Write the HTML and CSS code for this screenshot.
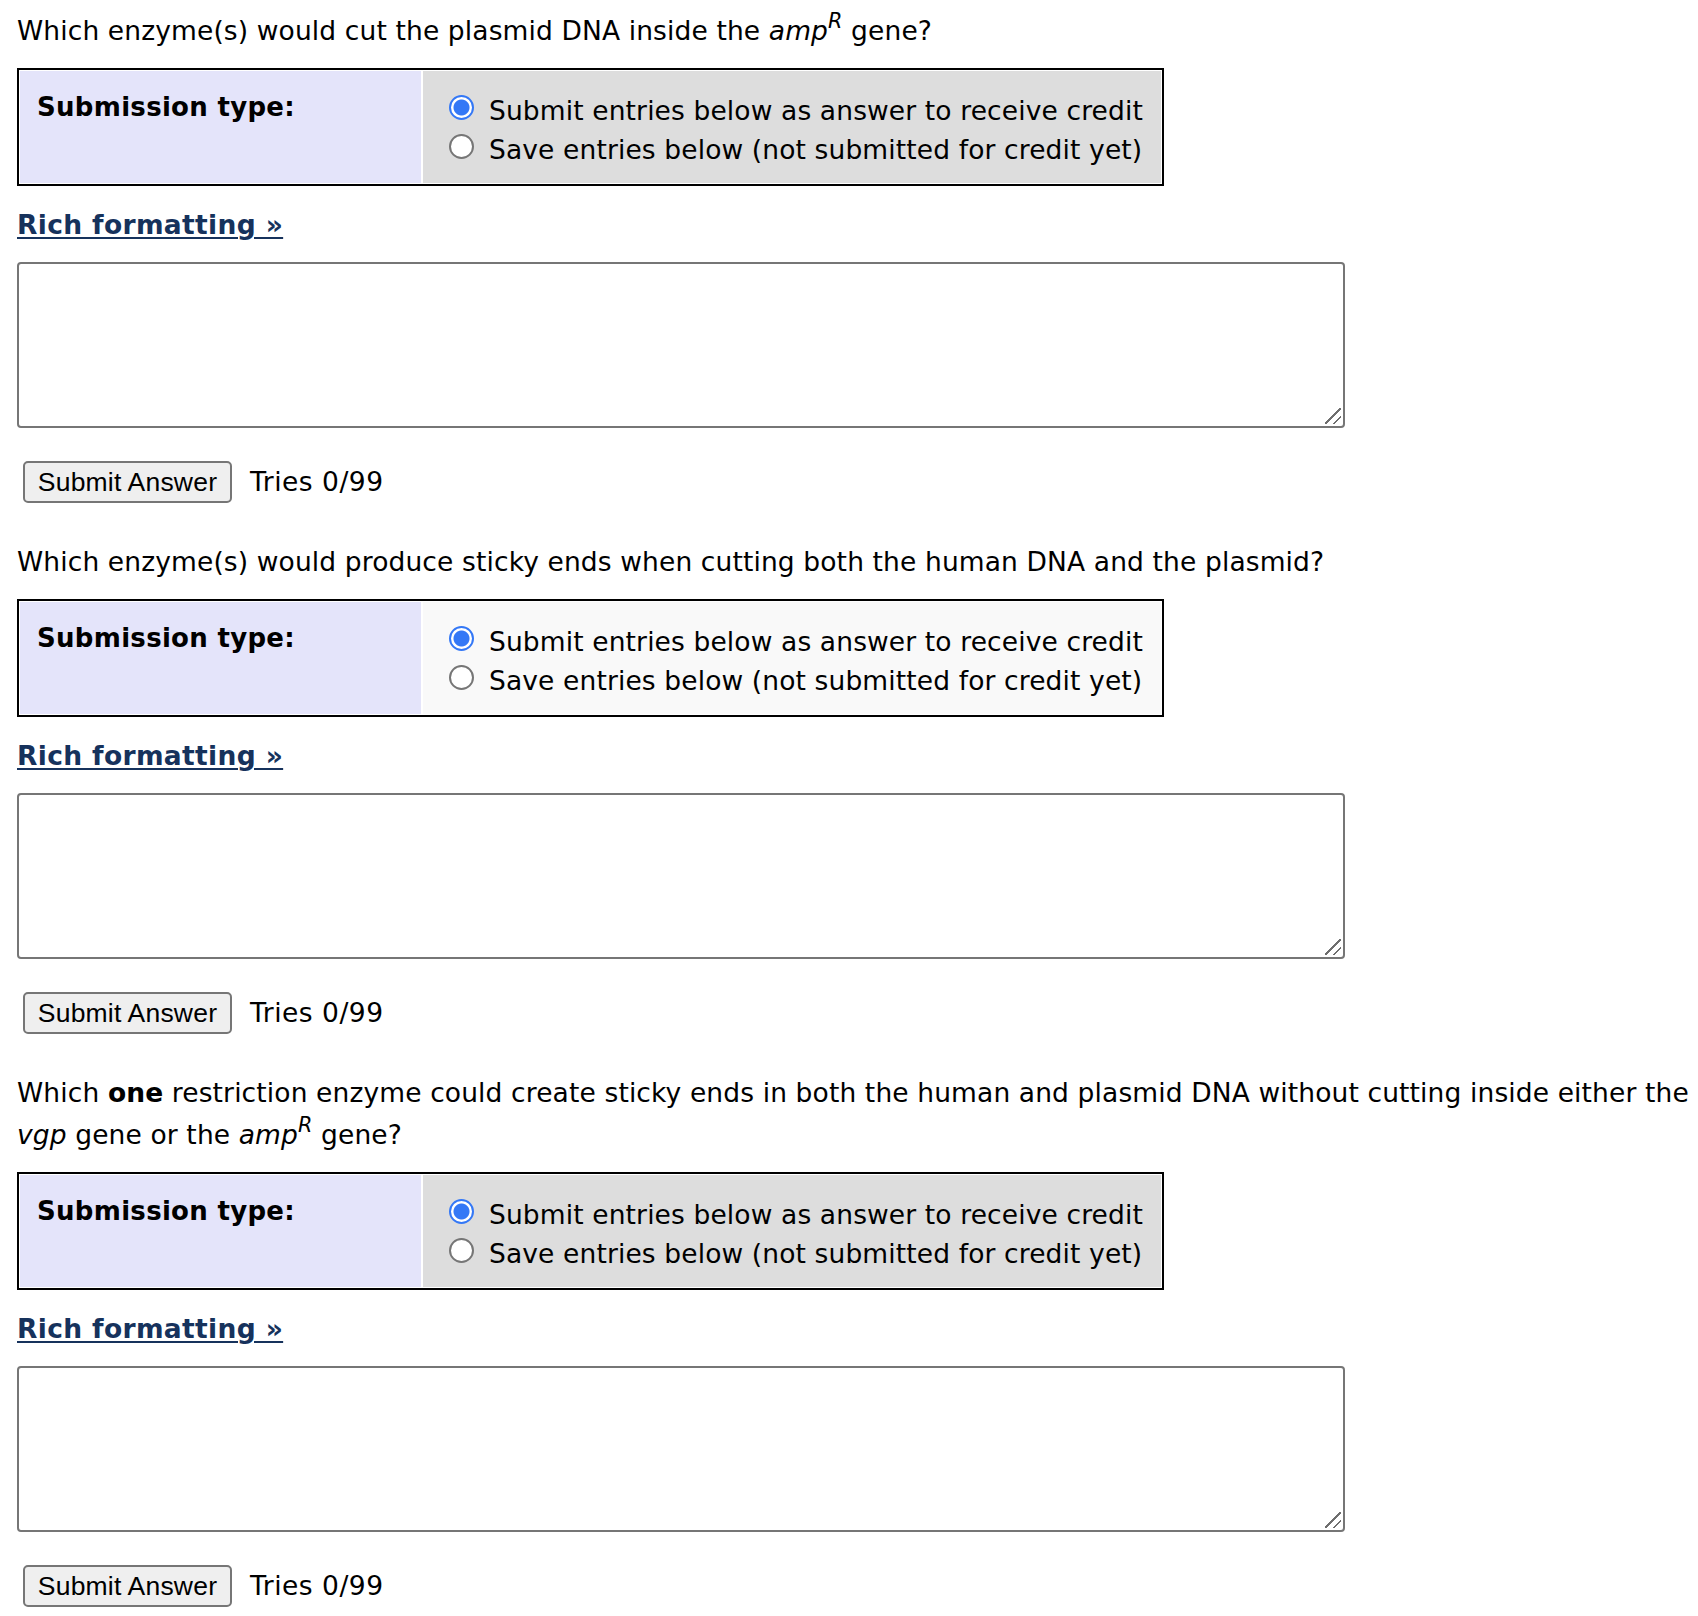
FILE: index.html
```html
<!DOCTYPE html>
<html lang="en">
<head>
<meta charset="utf-8">
<title>Questions</title>
<link rel="stylesheet" href="styles.css">
</head>
<body>
<div class="page">

  <section class="question">
    <p class="prompt">Which enzyme(s) would cut the plasmid DNA inside the <i>amp<sup>R</sup></i> gene?</p>
    <div class="subtype">
      <div class="subtype-label">Submission type:</div>
      <div class="subtype-options">
        <label class="opt"><input type="radio" name="s1" checked><span>Submit entries below as answer to receive credit</span></label>
        <label class="opt"><input type="radio" name="s1"><span>Save entries below (not submitted for credit yet)</span></label>
      </div>
    </div>
    <a class="rich" href="#">Rich formatting »</a>
    <textarea class="answer"></textarea>
    <div class="actions"><button class="submit" type="button">Submit Answer</button><span class="tries">Tries 0/99</span></div>
  </section>

  <section class="question">
    <p class="prompt">Which enzyme(s) would produce sticky ends when cutting both the human DNA and the plasmid?</p>
    <div class="subtype subtype-light">
      <div class="subtype-label">Submission type:</div>
      <div class="subtype-options">
        <label class="opt"><input type="radio" name="s2" checked><span>Submit entries below as answer to receive credit</span></label>
        <label class="opt"><input type="radio" name="s2"><span>Save entries below (not submitted for credit yet)</span></label>
      </div>
    </div>
    <a class="rich" href="#">Rich formatting »</a>
    <textarea class="answer"></textarea>
    <div class="actions"><button class="submit" type="button">Submit Answer</button><span class="tries">Tries 0/99</span></div>
  </section>

  <section class="question">
    <p class="prompt">Which <b>one</b> restriction enzyme could create sticky ends in both the human and plasmid DNA without cutting inside either the <i>vgp</i> gene or the <i>amp<sup>R</sup></i> gene?</p>
    <div class="subtype">
      <div class="subtype-label">Submission type:</div>
      <div class="subtype-options">
        <label class="opt"><input type="radio" name="s3" checked><span>Submit entries below as answer to receive credit</span></label>
        <label class="opt"><input type="radio" name="s3"><span>Save entries below (not submitted for credit yet)</span></label>
      </div>
    </div>
    <a class="rich" href="#">Rich formatting »</a>
    <textarea class="answer"></textarea>
    <div class="actions"><button class="submit" type="button">Submit Answer</button><span class="tries">Tries 0/99</span></div>
  </section>

</div>
</body>
</html>
```
FILE: styles.css
```css
html, body {
  margin: 0;
  padding: 0;
  background: #ffffff;
}

body {
  font-family: "DejaVu Sans", Verdana, sans-serif;
  font-size: 26.5px;
  letter-spacing: 0.12px;
  color: #000000;
}

.page {
  padding: 10px 0 0 17px;
}

.question + .question {
  margin-top: 38px;
}

.prompt {
  margin: 0 0 16px;
  line-height: 42px;
}

.prompt sup {
  font-size: 0.78em;
  line-height: 0;
  vertical-align: 0.6em;
}

.subtype {
  display: flex;
  width: 1147px;
  box-sizing: border-box;
  border: 2px solid #000000;
  padding: 1px;
  gap: 2px;
  background: #ffffff;
}

.subtype-label {
  width: 401px;
  box-sizing: border-box;
  padding: 17px;
  background: #e4e4fa;
  font-weight: bold;
  font-size: 26px;
  letter-spacing: 0.3px;
  line-height: 39px;
}

.subtype-options {
  flex: 1;
  padding: 17px 0 17px 26px;
  background: #dddddd;
  line-height: 39px;
}

.subtype-light .subtype-options {
  background: #f9f9f9;
}

.opt {
  display: flex;
  align-items: center;
  height: 39px;
}

.opt span {
  padding-top: 6px;
}

.opt input {
  appearance: none;
  -webkit-appearance: none;
  margin: 0 15px 0 0;
  width: 25px;
  height: 25px;
  box-sizing: border-box;
  border-radius: 50%;
  border: 2px solid #767676;
  background: #ffffff;
  flex: none;
}

.opt input:checked {
  border: 2px solid #3478f6;
  background: radial-gradient(circle, #3478f6 0 7.5px, #ffffff 8.5px);
}

.rich {
  display: block;
  width: max-content;
  margin-top: 18px;
  line-height: 42px;
  font-weight: bold;
  letter-spacing: 0.35px;
  color: #16325c;
  text-decoration: underline;
  text-decoration-thickness: 2px;
  text-underline-offset: 3px;
}

.answer {
  display: block;
  margin: 16px 0 0;
  width: 1328px;
  height: 166px;
  box-sizing: border-box;
  border: 2px solid #767676;
  border-radius: 4px;
  padding: 4px;
  resize: none;
  font-family: "DejaVu Sans", Verdana, sans-serif;
  font-size: 26px;
  background-color: #ffffff;
  background-image: linear-gradient(135deg, transparent 0 46%, #6e6e6e 46% 54%, transparent 54% 72%, #6e6e6e 72% 80%, transparent 80%);
  background-repeat: no-repeat;
  background-size: 16px 16px;
  background-position: right 2px bottom 2px;
}

.actions {
  display: flex;
  align-items: center;
  margin-top: 33px;
  height: 42px;
}

.submit {
  margin: 0 18px 0 6px;
  height: 42px;
  width: 209px;
  box-sizing: border-box;
  padding: 0;
  border: 2px solid #767676;
  border-radius: 5px;
  background: #efefef;
  font-family: "Liberation Sans", Arial, sans-serif;
  font-size: 26.5px;
  letter-spacing: 0.2px;
  color: #000000;
}

.tries {
  line-height: 42px;
  letter-spacing: 0.5px;
}
```
